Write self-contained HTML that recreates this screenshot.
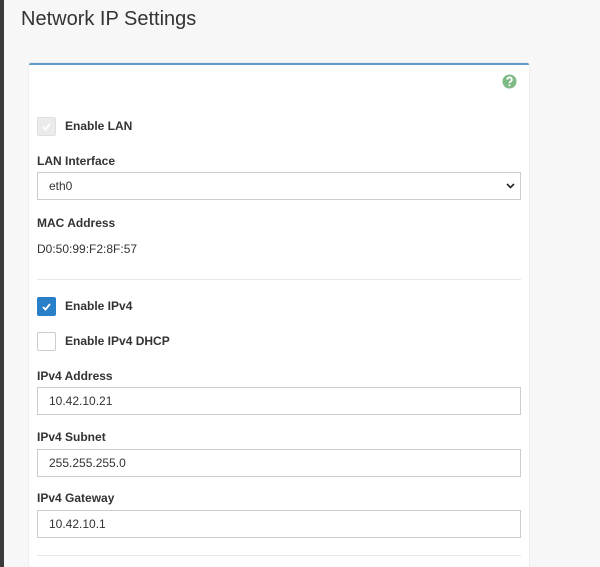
<!DOCTYPE html>
<html><head><style>
*{box-sizing:border-box;margin:0;padding:0}
html,body{width:600px;height:567px;overflow:hidden}
body{background:#f7f7f7;font-family:"Liberation Sans",sans-serif;color:#333;position:relative}
.strip{position:absolute;left:0;top:0;width:4px;height:567px;background:#3a3a3a}
h1{position:absolute;left:21px;top:8px;font-size:20px;font-weight:normal;color:#333}
.card{position:absolute;left:29px;top:63px;width:500px;height:504px;background:#fff;border-top:2px solid #5a9ec9;box-shadow:0 0 1px rgba(0,0,0,.25);border-radius:2px}
.a{position:absolute}
.lbl{font-size:12px;font-weight:bold;color:#333}
.cb{width:19px;height:19px;border:1px solid #ccc;border-radius:2px;background:#fff}
.inp{left:8px;width:484px;height:28px;border:1px solid #ccc;font-size:12px;padding-left:11px;line-height:26px;color:#333}
.hr{left:8px;width:484px;height:1px;background:#e8e8e8}
.val{font-size:12px;color:#333}
</style></head><body>
<div class="strip"></div>
<h1>Network IP Settings</h1>
<div class="card">
<svg class="a" style="left:473px;top:9px" width="15" height="15" viewBox="0 0 15 15"><circle cx="7.5" cy="7.5" r="7" fill="#7fba84"/><path d="M5.2 5.6a2.3 2.2 0 1 1 3.3 2c-.7.4-1 .7-1 1.5" stroke="#fff" stroke-width="1.8" fill="none"/><circle cx="7.5" cy="11.3" r="1" fill="#fff"/></svg>
<div class="a cb" style="left:8px;top:52px;background:#ebebeb;border-color:#e0e0e0"><svg width="17" height="17" viewBox="0 0 17 17"><path d="M5 9l2.5 2.5L12 6" stroke="#fff" stroke-width="1.8" fill="none"/></svg></div>
<div class="a lbl" style="left:36px;top:54px">Enable LAN</div>
<div class="a lbl" style="left:8px;top:89px">LAN Interface</div>
<div class="a inp" style="top:107px">eth0<svg style="position:absolute;right:5px;top:10px" width="9" height="6" viewBox="0 0 9 6"><path d="M1 1l3.5 3.5L8 1" stroke="#222" stroke-width="1.6" fill="none"/></svg></div>
<div class="a lbl" style="left:8px;top:151px">MAC Address</div>
<div class="a val" style="left:8px;top:177px">D0:50:99:F2:8F:57</div>
<div class="a hr" style="top:214px"></div>
<div class="a cb" style="left:8px;top:232px;background:#2a7fc9;border-color:#2a7fc9"><svg width="17" height="17" viewBox="0 0 17 17"><path d="M5 9l2.5 2.5L12 6" stroke="#fff" stroke-width="1.8" fill="none"/></svg></div>
<div class="a lbl" style="left:36px;top:234px">Enable IPv4</div>
<div class="a cb" style="left:8px;top:267px"></div>
<div class="a lbl" style="left:36px;top:269px">Enable IPv4 DHCP</div>
<div class="a lbl" style="left:8px;top:304px">IPv4 Address</div>
<div class="a inp" style="top:322px">10.42.10.21</div>
<div class="a lbl" style="left:8px;top:365px">IPv4 Subnet</div>
<div class="a inp" style="top:384px">255.255.255.0</div>
<div class="a lbl" style="left:8px;top:426px">IPv4 Gateway</div>
<div class="a inp" style="top:445px">10.42.10.1</div>
<div class="a hr" style="top:490px"></div>
</div>
</body></html>
